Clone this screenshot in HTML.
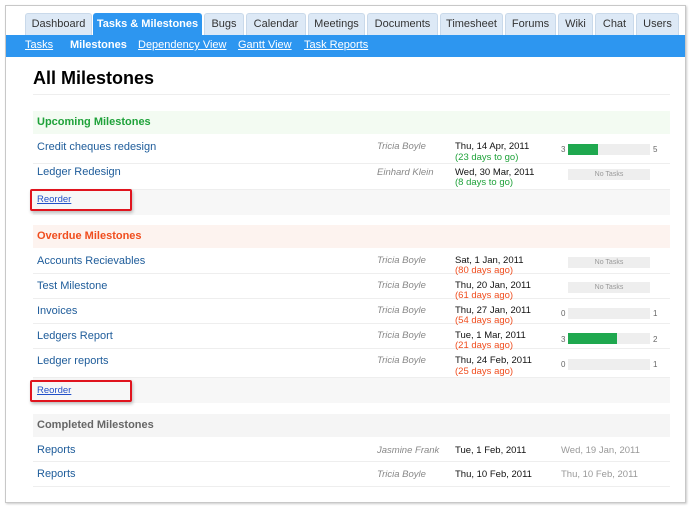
<!DOCTYPE html><html><head><style>
*{margin:0;padding:0;box-sizing:border-box}
body{width:690px;height:507px;background:#fff;font-family:"Liberation Sans",sans-serif;position:relative;overflow:hidden}
.frame{position:absolute;left:5px;top:5px;width:681px;height:498px;border:1px solid #c8c8c8;box-shadow:1px 1px 2px #ccc}
.a{position:absolute;white-space:nowrap}
.tab{position:absolute;top:13px;height:22px;background:#dde9f6;border:1px solid #c9d9ea;border-bottom:none;border-radius:3px 3px 0 0;font-size:11px;color:#333;text-align:center;line-height:21px}
.bar{position:absolute;left:6px;top:35px;width:679px;height:22px;background:#2d96f0}
.sub{position:absolute;top:39px;font-size:11px;color:#fff;text-decoration:underline}
.hdr{position:absolute;left:33px;width:637px;height:23px;font-size:11px;font-weight:bold;line-height:23px;padding-left:4px}
.row{position:absolute;left:33px;width:637px;border-bottom:1px solid #eee}
.n{font-size:11px;color:#1e5c9a}
.p{font-size:9.5px;color:#888;font-style:italic}
.d{font-size:9.5px;color:#111}
.g{font-size:9.5px;color:#1fa23a}
.r{font-size:9.5px;color:#f04d1e}
.nt{position:absolute;left:568px;width:82px;height:11px;background:#eee;font-size:7px;color:#999;text-align:center;line-height:11px}
.pb{position:absolute;left:568px;width:82px;height:11px;background:#eee}
.pb i{display:block;height:11px;background:#1fa84f}
.num{font-size:8px;color:#666}
.reo{position:absolute;left:33px;width:637px;height:25px;background:#f7f7f7}
.rb{position:absolute;left:30px;width:102px;height:22px;border:2px solid #e0141e;border-radius:2px;box-shadow:1px 2px 3px #bbb;background:#f7f7f7}
.rb span{position:absolute;left:5px;top:3px;font-size:9.5px;color:#2250c8;text-decoration:underline}
</style></head><body>
<div class="frame"></div>
<div class="tab" style="left:25px;width:67px">Dashboard</div>
<div class="tab" style="left:93px;width:109px;background:#2d96f0;border-color:#2d96f0;color:#fff;font-weight:bold">Tasks &amp; Milestones</div>
<div class="tab" style="left:204px;width:40px">Bugs</div>
<div class="tab" style="left:246px;width:60px">Calendar</div>
<div class="tab" style="left:308px;width:57px">Meetings</div>
<div class="tab" style="left:367px;width:71px">Documents</div>
<div class="tab" style="left:440px;width:63px">Timesheet</div>
<div class="tab" style="left:505px;width:51px">Forums</div>
<div class="tab" style="left:558px;width:35px">Wiki</div>
<div class="tab" style="left:595px;width:39px">Chat</div>
<div class="tab" style="left:636px;width:43px">Users</div>
<div class="bar"></div>
<div class="sub" style="left:25px">Tasks</div>
<div class="sub" style="left:70px;font-weight:bold;text-decoration:none">Milestones</div>
<div class="sub" style="left:138px">Dependency View</div>
<div class="sub" style="left:238px">Gantt View</div>
<div class="sub" style="left:304px">Task Reports</div>
<div class="a" style="left:79px;top:53px;width:0;height:0;border:4px solid transparent;border-bottom-color:#fff"></div>
<div class="a" style="left:33px;top:68px;font-size:18px;font-weight:bold;color:#000">All Milestones</div>
<div class="a" style="left:33px;top:94px;width:637px;border-top:1px solid #eee"></div>

<div class="hdr" style="top:111px;background:#f3fbf2;color:#1fa23a">Upcoming Milestones</div>
<div class="row" style="top:134px;height:30px"></div>
<div class="a n" style="left:37px;top:141px">Credit cheques redesign</div>
<div class="a p" style="left:377px;top:141px">Tricia Boyle</div>
<div class="a d" style="left:455px;top:141px">Thu, 14 Apr, 2011</div>
<div class="a g" style="left:455px;top:152px">(23 days to go)</div>
<div class="a num" style="left:561px;top:145px">3</div><div class="pb" style="top:144px"><i style="width:30px"></i></div><div class="a num" style="left:653px;top:145px">5</div>
<div class="row" style="top:164px;height:26px"></div>
<div class="a n" style="left:37px;top:166px">Ledger Redesign</div>
<div class="a p" style="left:377px;top:167px">Einhard Klein</div>
<div class="a d" style="left:455px;top:167px">Wed, 30 Mar, 2011</div>
<div class="a g" style="left:455px;top:177px">(8 days to go)</div>
<div class="nt" style="top:169px">No Tasks</div>
<div class="reo" style="top:190px"></div>
<div class="rb" style="top:189px"><span>Reorder</span></div>

<div class="hdr" style="top:225px;background:#fdf3ef;color:#f04d1e">Overdue Milestones</div>
<div class="row" style="top:248px;height:26px"></div>
<div class="a n" style="left:37px;top:255px">Accounts Recievables</div>
<div class="a p" style="left:377px;top:255px">Tricia Boyle</div>
<div class="a d" style="left:455px;top:255px">Sat, 1 Jan, 2011</div>
<div class="a r" style="left:455px;top:265px">(80 days ago)</div>
<div class="nt" style="top:257px">No Tasks</div>
<div class="row" style="top:274px;height:25px"></div>
<div class="a n" style="left:37px;top:280px">Test Milestone</div>
<div class="a p" style="left:377px;top:280px">Tricia Boyle</div>
<div class="a d" style="left:455px;top:280px">Thu, 20 Jan, 2011</div>
<div class="a r" style="left:455px;top:290px">(61 days ago)</div>
<div class="nt" style="top:282px">No Tasks</div>
<div class="row" style="top:299px;height:25px"></div>
<div class="a n" style="left:37px;top:305px">Invoices</div>
<div class="a p" style="left:377px;top:305px">Tricia Boyle</div>
<div class="a d" style="left:455px;top:305px">Thu, 27 Jan, 2011</div>
<div class="a r" style="left:455px;top:315px">(54 days ago)</div>
<div class="a num" style="left:561px;top:309px">0</div><div class="pb" style="top:308px"></div><div class="a num" style="left:653px;top:309px">1</div>
<div class="row" style="top:324px;height:25px"></div>
<div class="a n" style="left:37px;top:330px">Ledgers Report</div>
<div class="a p" style="left:377px;top:330px">Tricia Boyle</div>
<div class="a d" style="left:455px;top:330px">Tue, 1 Mar, 2011</div>
<div class="a r" style="left:455px;top:340px">(21 days ago)</div>
<div class="a num" style="left:561px;top:335px">3</div><div class="pb" style="top:333px"><i style="width:49px"></i></div><div class="a num" style="left:653px;top:335px">2</div>
<div class="row" style="top:349px;height:29px"></div>
<div class="a n" style="left:37px;top:355px">Ledger reports</div>
<div class="a p" style="left:377px;top:355px">Tricia Boyle</div>
<div class="a d" style="left:455px;top:355px">Thu, 24 Feb, 2011</div>
<div class="a r" style="left:455px;top:366px">(25 days ago)</div>
<div class="a num" style="left:561px;top:360px">0</div><div class="pb" style="top:359px"></div><div class="a num" style="left:653px;top:360px">1</div>
<div class="reo" style="top:378px"></div>
<div class="rb" style="top:380px"><span>Reorder</span></div>

<div class="hdr" style="top:414px;background:#f5f5f5;color:#666">Completed Milestones</div>
<div class="row" style="top:437px;height:25px"></div>
<div class="a n" style="left:37px;top:444px">Reports</div>
<div class="a p" style="left:377px;top:445px">Jasmine Frank</div>
<div class="a d" style="left:455px;top:445px">Tue, 1 Feb, 2011</div>
<div class="a d" style="left:561px;top:445px;color:#999">Wed, 19 Jan, 2011</div>
<div class="row" style="top:462px;height:25px"></div>
<div class="a n" style="left:37px;top:468px">Reports</div>
<div class="a p" style="left:377px;top:469px">Tricia Boyle</div>
<div class="a d" style="left:455px;top:469px">Thu, 10 Feb, 2011</div>
<div class="a d" style="left:561px;top:469px;color:#999">Thu, 10 Feb, 2011</div>
</body></html>
